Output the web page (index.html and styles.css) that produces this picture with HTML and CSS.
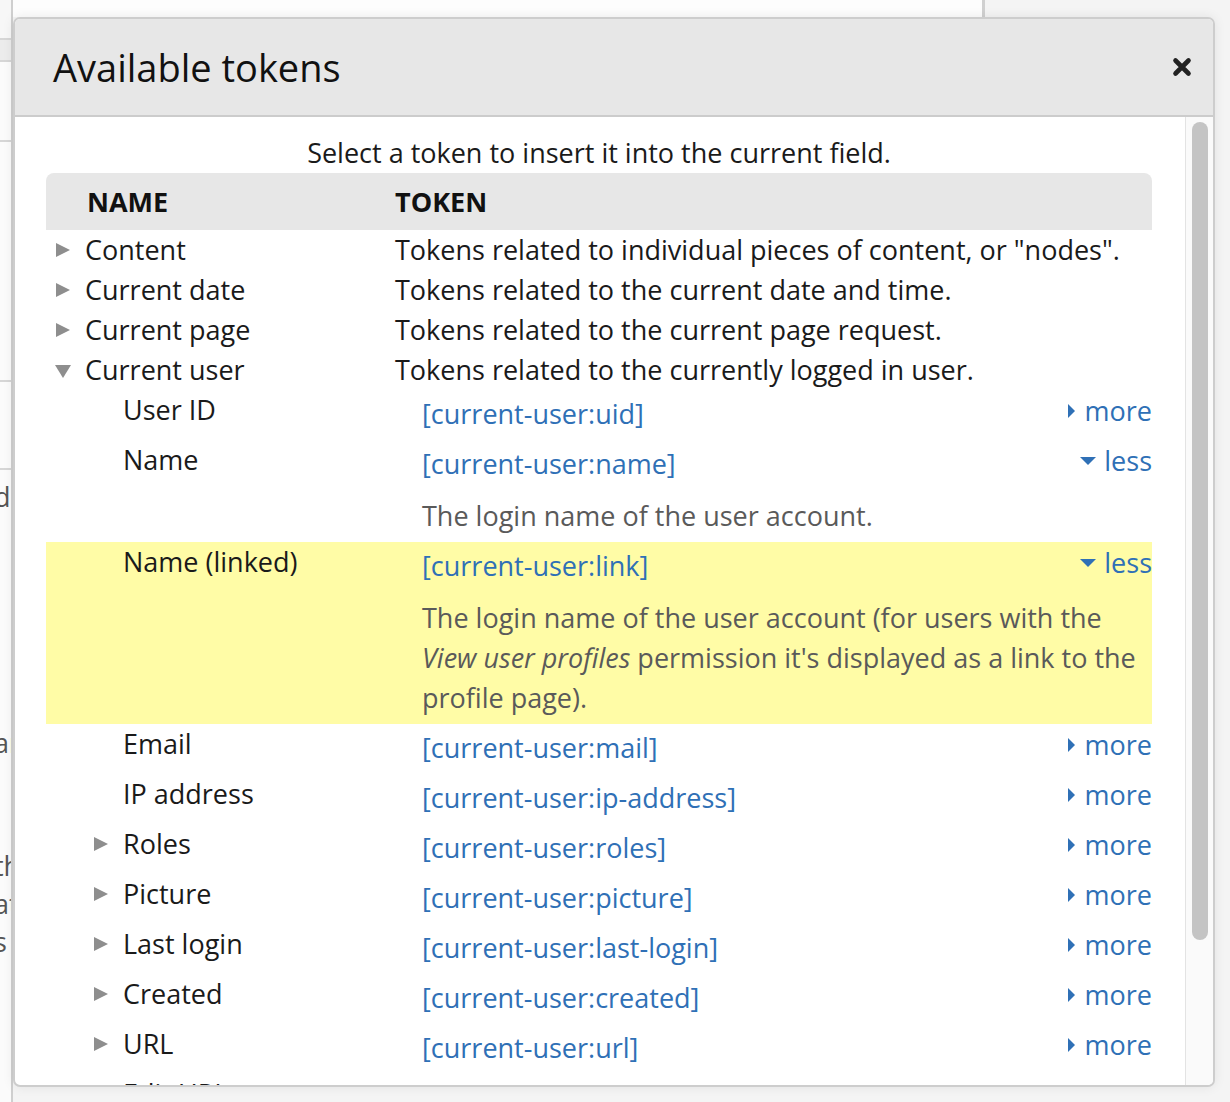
FILE: index.html
```html
<!DOCTYPE html>
<html lang="en">
<head>
<meta charset="utf-8">
<title>Available tokens</title>
<link rel="stylesheet" href="styles.css">
</head>
<body>
<div class="page">
  <div class="page-side">
    <div class="side-top"></div>
    <div class="side-band"></div>
    <div class="side-gap g1"></div>
    <div class="side-gap g2"></div>
    <div class="side-gap g3"></div>
    <div class="frag f1">date</div>
    <div class="frag f2">area</div>
    <div class="frag f3">the</div>
    <div class="frag f4">at</div>
    <div class="frag f5">s</div>
  </div>
  <div class="page-main">
    <div class="page-panel"></div>
  </div>
</div>

<div class="dialog" role="dialog" aria-label="Available tokens">
  <div class="dialog-head">
    <h1 class="dialog-title">Available tokens</h1>
    <button class="dialog-close" aria-label="Close">
      <svg viewBox="0 0 20 20" width="20" height="20"><path d="M3.5 3.5 L16.5 16.5 M16.5 3.5 L3.5 16.5" stroke="#222" stroke-width="4.6" stroke-linecap="round"/></svg>
    </button>
  </div>
  <div class="dialog-body">
    <div class="dialog-scroll">
      <p class="intro">Select a token to insert it into the current field.</p>
      <div class="tree">
        <div class="tree-head"><span class="th-name">NAME</span><span class="th-token">TOKEN</span></div>

        <div class="trow"><div class="tname"><i class="tw tw-right"></i>Content</div><div class="tdesc">Tokens related to individual pieces of content, or "nodes".</div></div>
        <div class="trow"><div class="tname"><i class="tw tw-right"></i>Current date</div><div class="tdesc">Tokens related to the current date and time.</div></div>
        <div class="trow"><div class="tname"><i class="tw tw-right"></i>Current page</div><div class="tdesc">Tokens related to the current page request.</div></div>
        <div class="trow"><div class="tname"><i class="tw tw-down"></i>Current user</div><div class="tdesc">Tokens related to the currently logged in user.</div></div>

        <div class="crow"><div class="cname">User ID</div><div class="ctoken"><a href="#">[current-user:uid]</a></div><a class="cmore" href="#"><i class="mk mk-right"></i>more</a></div>
        <div class="crow"><div class="cname">Name</div><div class="ctoken"><a href="#">[current-user:name]</a></div><a class="cmore" href="#"><i class="mk mk-down"></i>less</a><div class="cdesc">The login name of the user account.</div></div>
        <div class="crow hl"><div class="cname">Name (linked)</div><div class="ctoken"><a href="#">[current-user:link]</a></div><a class="cmore" href="#"><i class="mk mk-down"></i>less</a><div class="cdesc">The login name of the user account (for users with the <em>View user profiles</em> permission it's displayed as a link to the profile page).</div></div>
        <div class="crow"><div class="cname">Email</div><div class="ctoken"><a href="#">[current-user:mail]</a></div><a class="cmore" href="#"><i class="mk mk-right"></i>more</a></div>
        <div class="crow"><div class="cname">IP address</div><div class="ctoken"><a href="#">[current-user:ip-address]</a></div><a class="cmore" href="#"><i class="mk mk-right"></i>more</a></div>
        <div class="crow"><div class="cname kids"><i class="tw tw-right"></i>Roles</div><div class="ctoken"><a href="#">[current-user:roles]</a></div><a class="cmore" href="#"><i class="mk mk-right"></i>more</a></div>
        <div class="crow"><div class="cname kids"><i class="tw tw-right"></i>Picture</div><div class="ctoken"><a href="#">[current-user:picture]</a></div><a class="cmore" href="#"><i class="mk mk-right"></i>more</a></div>
        <div class="crow"><div class="cname kids"><i class="tw tw-right"></i>Last login</div><div class="ctoken"><a href="#">[current-user:last-login]</a></div><a class="cmore" href="#"><i class="mk mk-right"></i>more</a></div>
        <div class="crow"><div class="cname kids"><i class="tw tw-right"></i>Created</div><div class="ctoken"><a href="#">[current-user:created]</a></div><a class="cmore" href="#"><i class="mk mk-right"></i>more</a></div>
        <div class="crow"><div class="cname kids"><i class="tw tw-right"></i>URL</div><div class="ctoken"><a href="#">[current-user:url]</a></div><a class="cmore" href="#"><i class="mk mk-right"></i>more</a></div>
        <div class="crow"><div class="cname kids"><i class="tw tw-right"></i>Edit URL</div><div class="ctoken"><a href="#">[current-user:edit-url]</a></div><a class="cmore" href="#"><i class="mk mk-right"></i>more</a></div>
      </div>
    </div>
    <div class="scrollbar"><div class="thumb"></div></div>
  </div>
</div>
</body>
</html>
```

FILE: styles.css
```css
* { box-sizing: border-box; }

html, body {
  margin: 0;
  padding: 0;
}

body {
  width: 1230px;
  height: 1102px;
  overflow: hidden;
  background: #f4f4f4;
  font-family: "Open Sans", "Noto Sans", "Liberation Sans", sans-serif;
  color: #222;
  position: relative;
}

/* ---------- page behind the overlay ---------- */
.page {
  display: flex;
  height: 1102px;
}

.page-side {
  width: 13px;
  border-right: 2px solid #cfcfcf;
  background: #fbfbfb;
  overflow: hidden;
  white-space: nowrap;
}

.side-top { height: 38px; background: #f7f7f7; }

.side-band {
  height: 24px;
  background: #ececec;
  border-top: 2px solid #d6d6d6;
  border-bottom: 2px solid #d6d6d6;
}

.side-gap { border-bottom: 2px solid #d6d6d6; }
.side-gap.g1 { height: 80px; }
.side-gap.g2 { height: 240px; }
.side-gap.g3 { height: 88px; }

.frag {
  font-size: 27px;
  line-height: 38px;
  color: #555;
  margin-left: -6px;
}
.frag.f1 { margin-top: 8px; }
.frag.f2 { margin-top: 208px; }
.frag.f3 { margin-top: 85px; }

.page-main {
  flex: 1;
}

.page-panel {
  width: 972px;
  height: 17px;
  background: #fdfdfd;
  border-right: 3px solid #d0d0d0;
}

/* ---------- dialog ---------- */
.dialog {
  position: absolute;
  left: 13px;
  top: 17px;
  width: 1202px;
  height: 1070px;
  border: 2px solid #cdcdcd;
  border-radius: 7px;
  background: #fff;
  box-shadow: 0 0 12px rgba(0, 0, 0, 0.08);
  overflow: hidden;
  display: flex;
  flex-direction: column;
}

.dialog-head {
  height: 98px;
  flex: none;
  background: #e7e7e7;
  border-bottom: 2px solid #cccccc;
  display: flex;
  align-items: center;
  justify-content: space-between;
  padding: 0 21px 0 38px;
}

.dialog-title {
  margin: 0;
  font-size: 38px;
  font-weight: 400;
  color: #111;
}

.dialog-close {
  border: 0;
  background: transparent;
  padding: 0;
  width: 20px;
  height: 20px;
  display: flex;
  align-items: center;
  justify-content: center;
}

.dialog-body {
  flex: 1;
  display: flex;
  min-height: 0;
}

.dialog-scroll {
  flex: 1;
  overflow: hidden;
  padding: 16px 33px 0 31px;
}

.scrollbar {
  width: 28px;
  flex: none;
  border-left: 1px solid #e3e3e3;
  background: #fafafa;
  padding: 5px 0 0 6px;
}

.thumb {
  width: 16px;
  height: 818px;
  border-radius: 8px;
  background: #c4c4c4;
}

.intro {
  margin: 0;
  font-size: 27px;
  line-height: 40px;
  text-align: center;
  color: #1a1a1a;
}

/* ---------- token tree ---------- */
.tree {
  font-size: 27px;
  color: #1a1a1a;
}

.tree-head {
  display: grid;
  grid-template-columns: 349px 1fr;
  height: 57px;
  line-height: 57px;
  background: #e7e7e7;
  border-radius: 8px 8px 0 0;
  font-weight: 700;
  color: #111;
}

.th-name { padding-left: 41px; }

.trow {
  display: grid;
  grid-template-columns: 349px 1fr;
  line-height: 40px;
}

.tname {
  padding-left: 10px;
  display: flex;
  align-items: center;
  gap: 15px;
  white-space: nowrap;
}

.tdesc { white-space: nowrap; }

.tw {
  display: block;
  width: 14px;
  height: 15px;
  flex: none;
  position: relative;
}

.tw::before {
  content: "";
  position: absolute;
  border-style: solid;
  border-color: transparent;
}

.tw-right::before {
  left: 0;
  top: 0;
  border-width: 7.5px 0 7.5px 14px;
  border-left-color: #8e8e8e;
}

.tw-down::before {
  left: -1px;
  top: 2px;
  border-width: 13px 8.5px 0 8.5px;
  border-top-color: #8e8e8e;
}

.crow {
  display: grid;
  grid-template-columns: 349px 1fr auto;
  padding-bottom: 6px;
  line-height: 40px;
}

.crow.hl {
  background: #fffca6;
}

.cname {
  padding-left: 77px;
  white-space: nowrap;
  display: flex;
  align-items: center;
  align-self: start;
  height: 40px;
}

.cname.kids {
  padding-left: 48px;
  gap: 15px;
}

.ctoken {
  padding: 4px 0 0 27px;
}

.ctoken a,
.cmore {
  color: #2f70b6;
  text-decoration: none;
}

.cmore {
  display: flex;
  align-items: center;
  align-self: start;
  height: 40px;
  margin-top: 1px;
}

.cdesc {
  grid-column: 2 / 4;
  padding-left: 27px;
  margin-top: 12px;
  color: #5a5a5a;
}

.cdesc em { font-style: italic; }

.mk {
  display: block;
  width: 0;
  height: 0;
  border-style: solid;
  border-color: transparent;
}

.mk-right {
  border-width: 7.5px 0 7.5px 7.5px;
  border-left-color: #2f70b6;
  margin-right: 10px;
}

.mk-down {
  border-width: 8px 8px 0 8px;
  border-top-color: #2f70b6;
  margin-right: 8px;
}
```
